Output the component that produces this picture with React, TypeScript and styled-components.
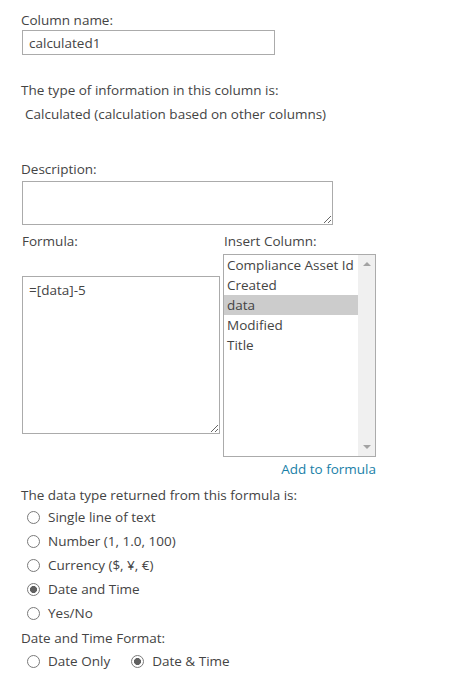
import React from 'react'
import styled, { createGlobalStyle } from 'styled-components'

const GlobalStyle = createGlobalStyle`
  html, body {
    margin: 0;
    padding: 0;
    background: #fff;
  }
  body {
    font-family: "Open Sans", "Noto Sans", sans-serif;
    font-size: 13.5px;
    color: #444;
  }
`

const columns = ['Compliance Asset Id', 'Created', 'data', 'Modified', 'Title']
const dataTypes = [
  'Single line of text',
  'Number (1, 1.0, 100)',
  'Currency ($, ¥, €)',
  'Date and Time',
  'Yes/No',
]

const App = () => {
  return (
    <Page>
      <GlobalStyle />
      <Label>Column name:</Label>
      <TextInput defaultValue="calculated1" />

      <Label $top={25}>The type of information in this column is:</Label>
      <Value>Calculated (calculation based on other columns)</Value>

      <Label $top={35}>Description:</Label>
      <Description />

      <FormulaRow>
        <FormulaCol>
          <Label>Formula:</Label>
          <Formula defaultValue="=[data]-5" />
        </FormulaCol>
        <InsertCol>
          <Label $left={1}>Insert Column:</Label>
          <ListBox>
            <ListItems>
              {columns.map((c) => (
                <ListItem key={c} $selected={c === 'data'}>
                  {c}
                </ListItem>
              ))}
            </ListItems>
            <ScrollTrack>
              <Arrow $up />
              <Arrow />
            </ScrollTrack>
          </ListBox>
          <AddLink>Add to formula</AddLink>
        </InsertCol>
      </FormulaRow>

      <Label $top={6}>The data type returned from this formula is:</Label>
      <RadioList>
        {dataTypes.map((t) => (
          <RadioRow key={t}>
            <Radio $checked={t === 'Date and Time'} />
            {t}
          </RadioRow>
        ))}
      </RadioList>

      <Label $top={3}>Date and Time Format:</Label>
      <FormatRow>
        <RadioRow>
          <Radio />
          Date Only
        </RadioRow>
        <RadioRow>
          <Radio $checked />
          Date &amp; Time
        </RadioRow>
      </FormatRow>
    </Page>
  )
}

export default App

const Page = styled.div`
  padding: 10px 0 0 21px;
  display: flex;
  flex-direction: column;
  align-items: flex-start;
`
const Label = styled.div<{ $top?: number; $left?: number }>`
  line-height: 20px;
  margin-top: ${(p) => p.$top || 0}px;
  margin-left: ${(p) => p.$left || 0}px;
  white-space: nowrap;
`
const Value = styled.div`
  line-height: 20px;
  margin: 4px 0 0 4px;
`
const TextInput = styled.input`
  box-sizing: border-box;
  margin: 0 0 0 1px;
  width: 253px;
  height: 25px;
  border: 1px solid #ababab;
  padding: 0 6px;
  font: inherit;
  color: #444;
  outline: none;
`
const Description = styled.textarea`
  box-sizing: border-box;
  margin: 2px 0 0 1px;
  width: 311px;
  height: 44px;
  border: 1px solid #ababab;
  padding: 2px 6px;
  font: inherit;
  color: #444;
  resize: both;
  outline: none;
`
const FormulaRow = styled.div`
  display: flex;
  margin-top: 6px;
  margin-left: 1px;
`
const FormulaCol = styled.div`
  width: 201px;
  display: flex;
  flex-direction: column;
`
const Formula = styled.textarea`
  box-sizing: border-box;
  margin: 25px 0 0 0;
  width: 198px;
  height: 158px;
  border: 1px solid #ababab;
  padding: 4px 6px;
  font: inherit;
  color: #444;
  resize: both;
  outline: none;
`
const InsertCol = styled.div`
  display: flex;
  flex-direction: column;
  align-items: flex-end;
  & > ${Label} {
    align-self: flex-start;
  }
`
const ListBox = styled.div`
  box-sizing: border-box;
  margin-top: 3px;
  width: 153px;
  height: 203px;
  border: 1px solid #ababab;
  display: flex;
`
const ListItems = styled.div`
  flex: 1;
  display: flex;
  flex-direction: column;
`
const ListItem = styled.div<{ $selected?: boolean }>`
  height: 20px;
  line-height: 20px;
  padding-left: 3px;
  white-space: nowrap;
  overflow: hidden;
  background: ${(p) => (p.$selected ? '#cccccc' : 'transparent')};
`
const ScrollTrack = styled.div`
  width: 17px;
  background: #f0f0f0;
  display: flex;
  flex-direction: column;
  justify-content: space-between;
  align-items: center;
  padding: 7px 0;
`
const Arrow = styled.div<{ $up?: boolean }>`
  width: 0;
  height: 0;
  border-left: 4px solid transparent;
  border-right: 4px solid transparent;
  ${(p) =>
    p.$up ? 'border-bottom: 4px solid #a3a3a3;' : 'border-top: 4px solid #a3a3a3;'}
`
const AddLink = styled.a`
  margin-top: 2px;
  line-height: 20px;
  color: #1a7fa8;
  cursor: pointer;
`
const RadioList = styled.div`
  display: flex;
  flex-direction: column;
`
const RadioRow = styled.label`
  display: flex;
  align-items: center;
  height: 24px;
  gap: 8px;
  padding-left: 6px;
  white-space: nowrap;
`
const Radio = styled.span<{ $checked?: boolean }>`
  box-sizing: border-box;
  width: 13px;
  height: 13px;
  border-radius: 50%;
  border: 1px solid #7a7a7a;
  background: ${(p) =>
    p.$checked
      ? 'radial-gradient(circle, #606060 0 3.2px, #fff 3.8px)'
      : '#fff'};
`
const FormatRow = styled.div`
  display: flex;
  gap: 15px;
  margin-top: 1px;
`
